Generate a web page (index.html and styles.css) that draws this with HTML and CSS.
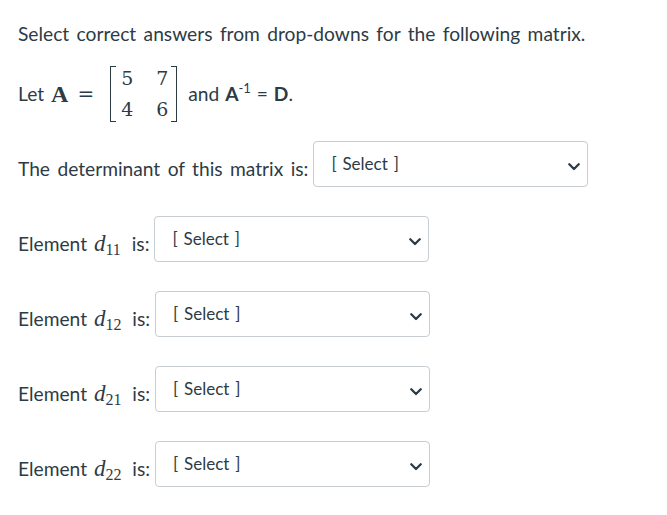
FILE: index.html
```html
<!DOCTYPE html>
<html lang="en">
<head>
<meta charset="utf-8">
<title>Matrix question</title>
<link rel="stylesheet" href="styles.css">
</head>
<body>
<div class="question">
  <p class="intro">Select correct answers from drop-downs for the following matrix.</p>

  <div class="matrix-line">
    <span class="txt">Let</span>
    <span class="math-bold">A</span>
    <span class="math-eq">=</span>
    <span class="matrix">
      <span class="bracket left"></span>
      <span class="cells">
        <span>5</span><span>7</span>
        <span>4</span><span>6</span>
      </span>
      <span class="bracket right"></span>
    </span>
    <span class="txt after">and <b>A</b><sup class="sup">-1</sup> = <b>D</b>.</span>
  </div>

  <div class="row det">
    <span class="label wide">The determinant of this matrix is:</span>
    <div class="select">
      <span class="value">[ Select ]</span>
      <svg class="chev" width="12" height="8" viewBox="0 0 12 8"><path d="M1.3 1.3 L6 6 L10.7 1.3" fill="none" stroke="#2d3b45" stroke-width="2.3" stroke-linecap="round" stroke-linejoin="round"/></svg>
    </div>
  </div>

  <div class="row">
    <span class="label">Element <span class="mi">d</span><span class="sub">11</span> is:</span>
    <div class="select">
      <span class="value">[ Select ]</span>
      <svg class="chev" width="12" height="8" viewBox="0 0 12 8"><path d="M1.3 1.3 L6 6 L10.7 1.3" fill="none" stroke="#2d3b45" stroke-width="2.3" stroke-linecap="round" stroke-linejoin="round"/></svg>
    </div>
  </div>

  <div class="row">
    <span class="label">Element <span class="mi">d</span><span class="sub">12</span> is:</span>
    <div class="select">
      <span class="value">[ Select ]</span>
      <svg class="chev" width="12" height="8" viewBox="0 0 12 8"><path d="M1.3 1.3 L6 6 L10.7 1.3" fill="none" stroke="#2d3b45" stroke-width="2.3" stroke-linecap="round" stroke-linejoin="round"/></svg>
    </div>
  </div>

  <div class="row">
    <span class="label">Element <span class="mi">d</span><span class="sub">21</span> is:</span>
    <div class="select">
      <span class="value">[ Select ]</span>
      <svg class="chev" width="12" height="8" viewBox="0 0 12 8"><path d="M1.3 1.3 L6 6 L10.7 1.3" fill="none" stroke="#2d3b45" stroke-width="2.3" stroke-linecap="round" stroke-linejoin="round"/></svg>
    </div>
  </div>

  <div class="row">
    <span class="label">Element <span class="mi">d</span><span class="sub">22</span> is:</span>
    <div class="select">
      <span class="value">[ Select ]</span>
      <svg class="chev" width="12" height="8" viewBox="0 0 12 8"><path d="M1.3 1.3 L6 6 L10.7 1.3" fill="none" stroke="#2d3b45" stroke-width="2.3" stroke-linecap="round" stroke-linejoin="round"/></svg>
    </div>
  </div>
</div>
</body>
</html>
```

FILE: styles.css
```css
html, body {
  margin: 0;
  padding: 0;
  background: #ffffff;
}

body {
  font-family: Lato, "Liberation Sans", sans-serif;
  font-size: 19.2px;
  line-height: 28.8px;
  color: #2d3b45;
}

.question {
  padding: 20px 18px 0 18px;
}

.intro {
  margin: 0;
  word-spacing: 2.5px;
}

.matrix-line {
  display: flex;
  align-items: center;
  margin-top: 17px;
  height: 57px;
}

.txt {
  white-space: nowrap;
}

.math-bold {
  font-family: "Liberation Serif", "DejaVu Serif", serif;
  font-weight: bold;
  font-size: 24px;
  margin-left: 7px;
}

.math-eq {
  font-family: "DejaVu Serif", "Liberation Serif", serif;
  font-size: 20px;
  margin-left: 9px;
  margin-right: 16px;
}

.matrix {
  display: flex;
  height: 56px;
}

.bracket {
  width: 5px;
  border-top: 1.5px solid #2d3b45;
  border-bottom: 1.5px solid #2d3b45;
}

.bracket.left {
  border-left: 1.8px solid #2d3b45;
}

.bracket.right {
  border-right: 1.8px solid #2d3b45;
}

.cells {
  display: grid;
  grid-template-columns: 10px 10px;
  column-gap: 25px;
  row-gap: 6px;
  padding: 0 5px 0 5px;
  font-family: "DejaVu Serif", "Liberation Serif", serif;
  font-size: 19px;
  line-height: 25px;
  text-align: center;
}

.after {
  margin-left: 11px;
  word-spacing: 1px;
}

.sup {
  font-size: 13px;
  line-height: 0;
  vertical-align: 8px;
}

.after b {
  font-weight: bold;
}

.row {
  display: flex;
  align-items: flex-start;
  margin-top: 29px;
  height: 46px;
}

.row.det {
  margin-top: 18px;
}

.label {
  margin-top: 14px;
  white-space: nowrap;
}

.label.wide {
  word-spacing: 2.5px;
}

.mi {
  font-family: "Liberation Serif", "DejaVu Serif", serif;
  font-style: italic;
  font-size: 23px;
  margin-left: 2px;
}

.sub {
  font-family: "Liberation Serif", "DejaVu Serif", serif;
  font-size: 16px;
  vertical-align: -4px;
  line-height: 0;
  margin-right: 6px;
}

.select {
  box-sizing: border-box;
  width: 275px;
  height: 46px;
  margin-left: 5px;
  border: 1px solid #c7cdd1;
  border-radius: 4px;
  background: #ffffff;
  display: flex;
  align-items: flex-start;
  justify-content: space-between;
  padding: 8px 0 0 17px;
}

.value {
  color: #2d3b45;
  font-size: 17px;
  word-spacing: 1.5px;
}

.chev {
  margin-top: 13px;
  margin-right: 7px;
}
```
